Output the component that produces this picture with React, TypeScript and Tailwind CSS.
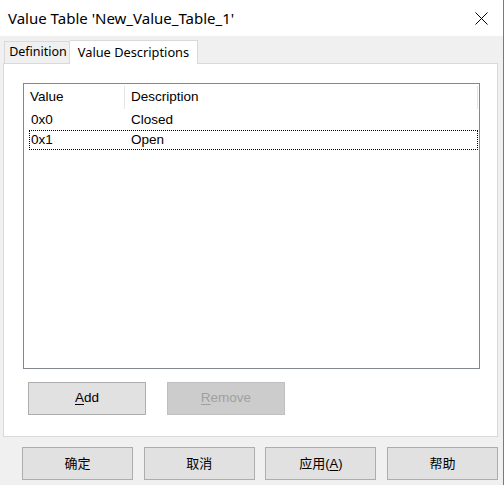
import React from "react";

const ui = { fontFamily: '"Noto Sans", "Open Sans", sans-serif' };
const classic = { fontFamily: '"Liberation Sans", Arial, sans-serif' };
const cjk = { fontFamily: '"Liberation Sans", "Noto Sans CJK SC", sans-serif' };

const rows = [
  { value: "0x0", desc: "Closed" },
  { value: "0x1", desc: "Open" },
];

function Button({
  label,
  mnemonic,
  rest,
  disabled = false,
  className = "",
}: {
  label?: string;
  mnemonic?: string;
  rest?: string;
  disabled?: boolean;
  className?: string;
}) {
  return (
    <div
      className={
        "flex items-center justify-center border " +
        (disabled
          ? "bg-[#cccccc] border-[#bfbfbf] text-[#a0a0a0] "
          : "bg-[#e1e1e1] border-[#adadad] text-black ") +
        className
      }
    >
      {label}
      {mnemonic && <span className="underline underline-offset-2">{mnemonic}</span>}
      {rest}
    </div>
  );
}

export default function App() {
  return (
    <div className="w-[504px] h-[485px] bg-[#f0f0f0] border-r border-[#7a7a7a] flex flex-col overflow-hidden">
      {/* Title bar */}
      <div className="h-[36px] bg-white flex items-center justify-between pl-[8px] pr-[15px] shrink-0">
        <span className="text-[15px] text-black" style={ui}>
          Value Table 'New_Value_Table_1'
        </span>
        <svg width="13" height="13" viewBox="0 0 13 13" className="mt-[1px]">
          <path d="M0.5 0.5 L12.5 12.5 M12.5 0.5 L0.5 12.5" stroke="#000" strokeWidth="1" />
        </svg>
      </div>

      {/* Tabs */}
      <div className="flex items-end pl-[4px] pt-[4px] h-[27px] shrink-0 relative z-10" style={ui}>
        <div className="h-[22px] w-[66px] border border-b-0 border-[#d9d9d9] bg-[#f0f0f0] flex items-center justify-center pl-[2px] text-[12.5px] text-black">
          Definition
        </div>
        <div className="h-[24px] w-[128px] -mb-px border border-b-0 border-l-0 border-[#d9d9d9] bg-white flex items-start justify-center pt-[2px] text-[12.8px] text-black">
          Value Descriptions
        </div>
      </div>

      {/* Tab panel */}
      <div className="ml-[3px] w-[495px] h-[374px] bg-white border border-[#d9d9d9] shrink-0 pl-[19px] pt-[19px] flex flex-col">
        <div className="w-[457px] h-[286px] border border-[#828790] bg-white flex flex-col pt-[1px]" style={classic}>
          <div className="h-[25px] flex items-center text-[13.5px] text-black">
            <div className="w-[100px] pl-[6px] h-full flex items-center">Value</div>
            <div className="w-px h-[23px] bg-[#e5e5e5]" />
            <div className="flex-1 pl-[6px] h-full flex items-center">Description</div>
            <div className="w-px h-[23px] bg-[#e5e5e5] mr-[1px]" />
          </div>
          {rows.map((r, i) => (
            <div
              key={r.value}
              className={
                "h-[20px] ml-[5px] mr-[1px] flex items-center text-[13.5px] text-black border border-dotted " +
                (i === 1 ? "border-black" : "border-transparent")
              }
            >
              <div className="w-[101px] pl-[1px]">{r.value}</div>
              <div className="flex-1">{r.desc}</div>
            </div>
          ))}
        </div>

        <div className="flex gap-[21px] mt-[13px] ml-[5px] text-[13.5px]" style={classic}>
          <Button mnemonic="A" rest="dd" className="w-[118px] h-[33px]" />
          <Button mnemonic="R" rest="emove" disabled className="w-[118px] h-[33px]" />
        </div>
      </div>

      {/* Dialog buttons */}
      <div className="flex gap-[10.7px] pl-[22px] mt-[10px] text-[13px]" style={cjk}>
        <Button label="确定" className="w-[111px] h-[33px]" />
        <Button label="取消" className="w-[111px] h-[33px]" />
        <Button label="应用(" mnemonic="A" rest=")" className="w-[111px] h-[33px]" />
        <Button label="帮助" className="w-[111px] h-[33px]" />
      </div>
    </div>
  );
}
